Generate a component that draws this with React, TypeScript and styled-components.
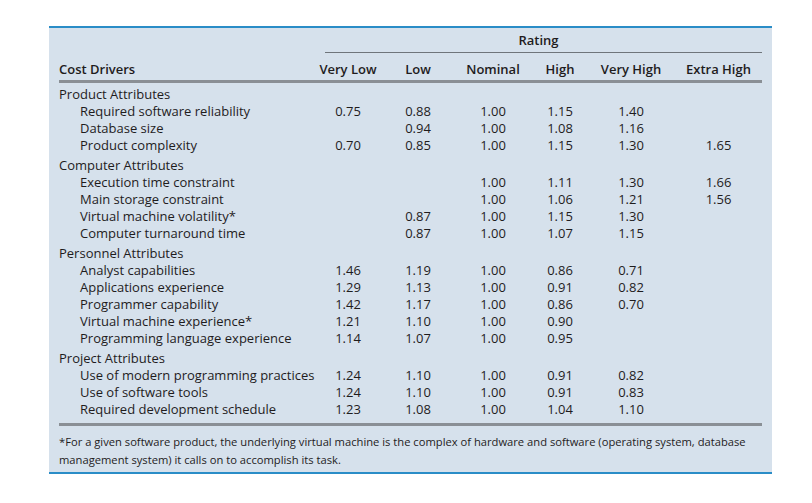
import React from "react";
import styled, { createGlobalStyle, css } from "styled-components";

const GlobalStyle = createGlobalStyle`
  body {
    margin: 0;
    background: #ffffff;
    font-family: "Open Sans", "Noto Sans", sans-serif;
    color: #1f1c1d;
  }
`;

type Item = { name: string; values: string[] };
type Group = { title: string; items: Item[] };

const columns = ["Very Low", "Low", "Nominal", "High", "Very High", "Extra High"];

const groups: Group[] = [
  {
    title: "Product Attributes",
    items: [
      { name: "Required software reliability", values: ["0.75", "0.88", "1.00", "1.15", "1.40", ""] },
      { name: "Database size", values: ["", "0.94", "1.00", "1.08", "1.16", ""] },
      { name: "Product complexity", values: ["0.70", "0.85", "1.00", "1.15", "1.30", "1.65"] },
    ],
  },
  {
    title: "Computer Attributes",
    items: [
      { name: "Execution time constraint", values: ["", "", "1.00", "1.11", "1.30", "1.66"] },
      { name: "Main storage constraint", values: ["", "", "1.00", "1.06", "1.21", "1.56"] },
      { name: "Virtual machine volatility*", values: ["", "0.87", "1.00", "1.15", "1.30", ""] },
      { name: "Computer turnaround time", values: ["", "0.87", "1.00", "1.07", "1.15", ""] },
    ],
  },
  {
    title: "Personnel Attributes",
    items: [
      { name: "Analyst capabilities", values: ["1.46", "1.19", "1.00", "0.86", "0.71", ""] },
      { name: "Applications experience", values: ["1.29", "1.13", "1.00", "0.91", "0.82", ""] },
      { name: "Programmer capability", values: ["1.42", "1.17", "1.00", "0.86", "0.70", ""] },
      { name: "Virtual machine experience*", values: ["1.21", "1.10", "1.00", "0.90", "", ""] },
      { name: "Programming language experience", values: ["1.14", "1.07", "1.00", "0.95", "", ""] },
    ],
  },
  {
    title: "Project Attributes",
    items: [
      { name: "Use of modern programming practices", values: ["1.24", "1.10", "1.00", "0.91", "0.82", ""] },
      { name: "Use of software tools", values: ["1.24", "1.10", "1.00", "0.91", "0.83", ""] },
      { name: "Required development schedule", values: ["1.23", "1.08", "1.00", "1.04", "1.10", ""] },
    ],
  },
];

const gridCols = css`
  display: grid;
  grid-template-columns: 254px 70px 70px 80px 54px 88px 87px;
`;

const Page = styled.div`
  padding: 26px 0 0 49px;
`;

const Panel = styled.div`
  width: 723px;
  box-sizing: border-box;
  background: #d6e1ec;
  border-top: 2px solid #2a8dc7;
  border-bottom: 2px solid #2a8dc7;
  padding: 0 10px;
  font-size: 13px;
`;

const RatingRow = styled.div`
  ${gridCols};
  height: 25px;
`;

const RatingLabel = styled.div`
  grid-column: 2 / -1;
  margin-left: 12px;
  border-bottom: 1.5px solid #6f757b;
  text-align: center;
  font-weight: 600;
  line-height: 24px;
  padding-right: 10px;
`;

const HeadRow = styled.div`
  ${gridCols};
  height: 27px;
  align-items: center;
  border-bottom: 3px solid #8a8f95;
  font-weight: 600;
`;

const HeadCell = styled.div<{ $first?: boolean }>`
  text-align: ${(p) => (p.$first ? "left" : "center")};
  white-space: nowrap;
  padding-top: 4px;
`;

const Body = styled.div`
  padding-top: 3px;
  padding-bottom: 5px;
  border-bottom: 3px solid #8a8f95;
`;

const GroupBox = styled.div`
  & + & {
    margin-top: 3px;
  }
`;

const Row = styled.div`
  ${gridCols};
  height: 17px;
  line-height: 17px;
`;

const Label = styled.div<{ $indent?: boolean }>`
  padding-left: ${(p) => (p.$indent ? "21px" : "0")};
  white-space: nowrap;
`;

const Num = styled.div`
  text-align: center;
`;

const Footnote = styled.p`
  margin: 0;
  padding: 7px 0 3px;
  font-size: 11.2px;
  line-height: 18px;
  white-space: nowrap;
`;

export default function App() {
  return (
    <>
      <GlobalStyle />
      <Page>
        <Panel>
          <RatingRow>
            <RatingLabel>Rating</RatingLabel>
          </RatingRow>
          <HeadRow>
            <HeadCell $first>Cost Drivers</HeadCell>
            {columns.map((c) => (
              <HeadCell key={c}>{c}</HeadCell>
            ))}
          </HeadRow>
          <Body>
            {groups.map((g) => (
              <GroupBox key={g.title}>
                <Row>
                  <Label>{g.title}</Label>
                </Row>
                {g.items.map((it) => (
                  <Row key={it.name}>
                    <Label $indent>{it.name}</Label>
                    {it.values.map((v, i) => (
                      <Num key={i}>{v}</Num>
                    ))}
                  </Row>
                ))}
              </GroupBox>
            ))}
          </Body>
          <Footnote>
            *For a given software product, the underlying virtual machine is the complex of hardware and software (operating system, database
            <br />
            management system) it calls on to accomplish its task.
          </Footnote>
        </Panel>
      </Page>
    </>
  );
}
